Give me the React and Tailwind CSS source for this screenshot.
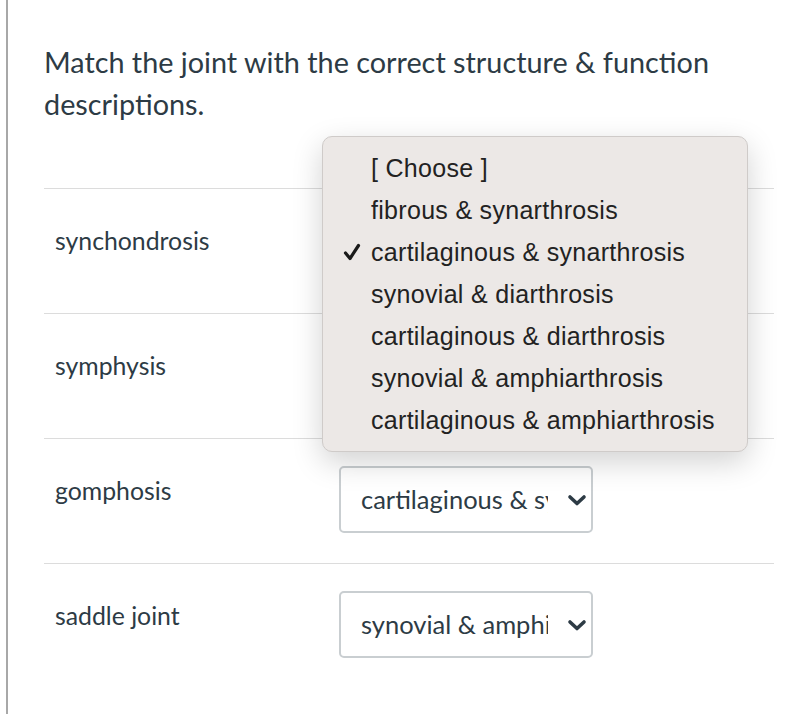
import React from 'react';

const rows = [
  { label: 'synchondrosis', value: 'cartilaginous & synarthrosis' },
  { label: 'symphysis', value: '[ Choose ]' },
  { label: 'gomphosis', value: 'cartilaginous & synarthrosis' },
  { label: 'saddle joint', value: 'synovial & amphiarthrosis' },
];

const options = [
  '[ Choose ]',
  'fibrous & synarthrosis',
  'cartilaginous & synarthrosis',
  'synovial & diarthrosis',
  'cartilaginous & diarthrosis',
  'synovial & amphiarthrosis',
  'cartilaginous & amphiarthrosis',
];

const Chevron = () => (
  <svg width="20" height="14" viewBox="0 0 20 14" className="shrink-0">
    <path d="M3 4 L10 10.5 L17 4" fill="none" stroke="#2d3b45" strokeWidth="3.6" strokeLinecap="round" strokeLinejoin="round" />
  </svg>
);

const Check = () => (
  <svg width="18" height="18" viewBox="0 0 18 18" className="absolute left-[20px] top-[12px]">
    <path d="M2.5 10 L7 15.5 L15.5 2.5" fill="none" stroke="#1a1a1a" strokeWidth="3.2" strokeLinecap="round" strokeLinejoin="round" />
  </svg>
);

const Select = ({ value }) => (
  <div className="flex h-[67px] w-[254px] items-center rounded-[5px] border-2 border-[#c9ced1] bg-white pl-[20px] pr-[4px]">
    <span className="w-[187px] overflow-hidden whitespace-nowrap text-[25.5px] text-[#2d3b45]">{value}</span>
    <div className="ml-auto">
      <Chevron />
    </div>
  </div>
);

export default function App() {
  return (
    <div className="relative flex h-[714px] w-[796px] bg-white font-['Lato',sans-serif]">
      <div className="ml-[6px] border-l-2 border-[#a8a8a8]" />
      <div className="w-[766px] pl-[36px] pt-[41px]">
        <h1 className="text-[28.8px] leading-[42px] text-[#2d3b45]">
          Match the joint with the correct structure &amp; function descriptions.
        </h1>
        <div className="mt-[63px]">
          {rows.map((row) => (
            <div key={row.label} className="flex h-[125px] border-t border-[#dcdcdc]">
              <div className="w-[295px] pl-[11px] pt-[36px] text-[24.8px] leading-[32px] text-[#2d3b45]">{row.label}</div>
              <div className="pt-[27px]">
                <Select value={row.value} />
              </div>
            </div>
          ))}
        </div>
      </div>

      <div className="absolute left-[322px] top-[136px] w-[426px] rounded-[10px] border border-[#cfcbc9] bg-[#ece8e6] py-[10px] font-['Liberation_Sans',Arial,sans-serif] shadow-[0_10px_30px_rgba(0,0,0,0.18)]">
        {options.map((opt, i) => (
          <div key={opt} className="relative h-[42px] pl-[48px] text-[25px] leading-[42px] tracking-[0.3px] text-[#222222]">
            {i === 2 && <Check />}
            {opt}
          </div>
        ))}
      </div>
    </div>
  );
}
